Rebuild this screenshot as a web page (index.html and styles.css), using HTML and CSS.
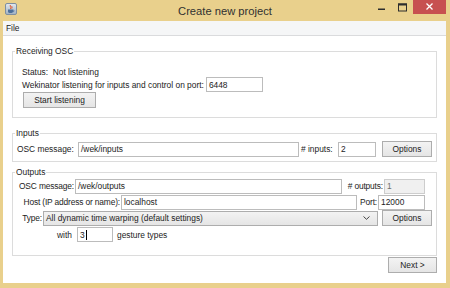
FILE: index.html
```html
<!DOCTYPE html>
<html>
<head>
<meta charset="utf-8">
<link rel="stylesheet" href="styles.css">
</head>
<body>
<div class="window">
  <div class="titlebar">
    <div class="tb-left">
      <svg class="appicon" width="12" height="12" viewBox="0 0 12 12">
        <defs>
          <linearGradient id="ig" x1="0" y1="0" x2="0" y2="1">
            <stop offset="0" stop-color="#e4e9ef"/>
            <stop offset="1" stop-color="#9fb0c2"/>
          </linearGradient>
        </defs>
        <rect x="0.5" y="0.5" width="11" height="11" rx="1.5" fill="url(#ig)" stroke="#7f8fa0" stroke-width="1"/>
        <path d="M5.5 2 C4 3.5 7 4 5.5 6 M7 3 C6.3 4 7.6 4.5 6.8 5.5" stroke="#e2572b" stroke-width="1" fill="none"/>
        <path d="M3 6.5 H8 V8.5 C8 9.5 7 10 5.5 10 C4 10 3 9.5 3 8.5 Z" fill="#4d6f9a"/>
        <path d="M8 7 C9.5 7 9.5 8.8 8 8.8" stroke="#4d6f9a" stroke-width="0.8" fill="none"/>
      </svg>
    </div>
    <div class="title">Create new project</div>
    <div class="controls">
      <svg class="ctl-min" width="7" height="14" viewBox="0 0 7 14"><rect x="0" y="8.5" width="7" height="1.5" fill="#2d2d2d"/></svg>
      <svg class="ctl-max" width="9" height="14" viewBox="0 0 9 14"><rect x="0.5" y="4" width="8" height="7" fill="none" stroke="#2d2d2d" stroke-width="1"/><rect x="0" y="3.5" width="9" height="2" fill="#2d2d2d"/></svg>
      <svg class="ctl-close" width="33" height="14" viewBox="0 0 33 14"><rect x="0" y="0" width="33" height="14" fill="#c75050"/><path d="M13.5 3.5 L19.5 9.5 M19.5 3.5 L13.5 9.5" stroke="#ffffff" stroke-width="1.3"/></svg>
    </div>
  </div>
  <div class="client">
    <div class="menubar"><span class="menu-item">File</span></div>
    <div class="content">
      <fieldset class="group recv">
        <legend>Receiving OSC</legend>
        <div class="gbody recv-body">
          <div class="row status">Status:&nbsp; Not listening</div>
          <div class="row port-row"><span class="lbl-plain">Wekinator listening for inputs and control on port:</span><div class="field w-port">6448</div></div>
          <div class="row btn-row"><div class="btn start">Start listening</div></div>
        </div>
      </fieldset>

      <fieldset class="group inputs">
        <legend>Inputs</legend>
        <div class="gbody inputs-body">
          <div class="row r16">
            <span class="lbl l-in-osc">OSC message:</span>
            <div class="field w-in-osc">/wek/inputs</div>
            <span class="lbl l-in-num">#&nbsp;inputs:</span>
            <div class="field w-in-num">2</div>
            <div class="btn opt">Options</div>
          </div>
        </div>
      </fieldset>

      <fieldset class="group outputs">
        <legend>Outputs</legend>
        <div class="gbody outputs-body">
          <div class="row r16">
            <span class="lbl ra l-out-osc">OSC message:</span>
            <div class="field w-out-osc">/wek/outputs</div>
            <span class="lbl ra l-out-num">#&nbsp;outputs:</span>
            <div class="field disabled w-out-num">1</div>
          </div>
          <div class="row r16">
            <span class="lbl ra l-host">Host (IP address or name):</span>
            <div class="field w-host">localhost</div>
            <span class="lbl ra l-port">Port:</span>
            <div class="field w-port2">12000</div>
          </div>
          <div class="row r16">
            <span class="lbl ra l-type">Type:</span>
            <div class="combo">
              <span class="combo-text">All dynamic time warping (default settings)</span>
              <svg class="chev" width="7" height="4" viewBox="0 0 7 4"><path d="M0.5 0.5 L3.5 3.3 L6.5 0.5" stroke="#444" stroke-width="1" fill="none"/></svg>
            </div>
            <div class="btn opt">Options</div>
          </div>
          <div class="row r15 with-row">
            <span class="lbl l-with">with</span>
            <div class="field w-with">3<span class="caret"></span></div>
            <span class="lbl l-gest">gesture types</span>
          </div>
        </div>
      </fieldset>

      <div class="footer"><div class="btn next">Next &gt;</div></div>
    </div>
  </div>
</div>
</body>
</html>
```

FILE: styles.css
```css
* { box-sizing: border-box; }
html, body { margin: 0; padding: 0; }
body {
  background: #e9d08c;
  font-family: "Liberation Sans", Arial, sans-serif;
  font-size: 8.4px;
  color: #1c1c1c;
}
.window {
  width: 450px;
  height: 288px;
  background: #e9d08c;
  display: flex;
  flex-direction: column;
}
.titlebar {
  height: 21px;
  flex-shrink: 0;
  display: grid;
  grid-template-columns: 150px 1fr 150px;
  align-items: start;
}
.tb-left { padding: 3px 0 0 5px; display: flex; }
.appicon { display: block; }
.title {
  text-align: center;
  font-size: 11.2px;
  color: #303030;
  line-height: 13px;
  padding-top: 5px;
  white-space: nowrap;
}
.controls {
  display: flex;
  justify-content: flex-end;
  align-items: flex-start;
  padding-right: 4px;
}
.controls svg { display: block; flex-shrink: 0; }
.ctl-max { margin-left: 13px; }
.ctl-close { margin-left: 6px; }
.client {
  margin-left: 3px;
  width: 443px;
  height: 262px;
  flex-shrink: 0;
  background: #ffffff;
  display: flex;
  flex-direction: column;
}
.menubar {
  height: 15px;
  flex-shrink: 0;
  background: #f5f6f7;
  border-bottom: 1px solid #dadbdd;
  display: flex;
  align-items: center;
  padding-left: 3px;
}
.menu-item { line-height: 10px; }
.content {
  padding: 10px 9px 0 9px;
  display: flex;
  flex-direction: column;
}
.group {
  margin: 0;
  padding: 0;
  border: 1px solid #dcdcdc;
  min-width: 0;
}
.group legend {
  padding: 0 1px;
  margin-left: 2px;
  line-height: 10px;
  font-size: 8.4px;
}
.row { display: flex; align-items: center; }
.r16 { height: 16px; }
.r15 { height: 15px; }
.recv-body { padding: 11px 9px 9px 9px; }
.status { height: 10px; line-height: 10px; }
.port-row { height: 15px; }
.lbl-plain { margin-right: 2px; }
.btn-row { height: 16px; }
.field {
  flex-shrink: 0;
  height: 15px;
  border: 1px solid #bcbcbc;
  background: #fff;
  padding-left: 2px;
  display: flex;
  align-items: center;
  white-space: nowrap;
  overflow: hidden;
}
.field.disabled {
  background: #f0f0f0;
  color: #6f6f6f;
  border-color: #cdcdcd;
}
.btn {
  flex-shrink: 0;
  height: 16px;
  border: 1px solid #adadad;
  background: linear-gradient(#f3f3f3, #e5e5e5);
  display: flex;
  align-items: center;
  justify-content: center;
  white-space: nowrap;
}
.w-port { width: 57px; }
.start { width: 73px; margin-left: 1px; }

.inputs { margin-top: 10px; }
.inputs-body { padding: 3px 5px 4px 4px; }
.lbl { white-space: nowrap; flex-shrink: 0; }
.ra {
  display: flex;
  justify-content: flex-end;
  padding-right: 1px;
  letter-spacing: -0.15px;
}
.l-in-osc { width: 61px; }
.w-in-osc { width: 221px; }
.l-in-num { width: 37px; margin-left: 2px; }
.w-in-num { width: 38px; }
.opt { width: 50px; margin-left: 6px; }

.outputs { margin-top: 5px; }
.outputs-body { padding: 1px 9px 13px 9px; }
.l-out-osc { width: 53px; }
.w-out-osc { width: 267px; }
.l-out-num { width: 42px; }
.w-out-num { width: 41px; }
.l-host { width: 99px; }
.w-host { width: 236px; }
.l-port { width: 21px; }
.w-port2 { width: 47px; }
.l-type { width: 21px; }
.combo {
  flex-shrink: 0;
  width: 335px;
  height: 15px;
  border: 1px solid #adadad;
  background: linear-gradient(#f3f3f3, #e5e5e5);
  display: flex;
  align-items: center;
  padding-left: 2px;
  padding-right: 7px;
}
.combo-text { flex: 1; white-space: nowrap; }
.chev { display: block; }
.outputs .opt { margin-left: 4px; }
.with-row { margin-top: 1px; padding-left: 35px; }
.l-with { width: 20px; }
.w-with { width: 36px; }
.caret {
  display: inline-block;
  width: 1px;
  height: 10px;
  background: #000;
  margin-left: 1px;
}
.l-gest { margin-left: 4px; }

.footer {
  display: flex;
  justify-content: flex-end;
  padding-top: 1px;
}
.next { width: 49px; }
```
